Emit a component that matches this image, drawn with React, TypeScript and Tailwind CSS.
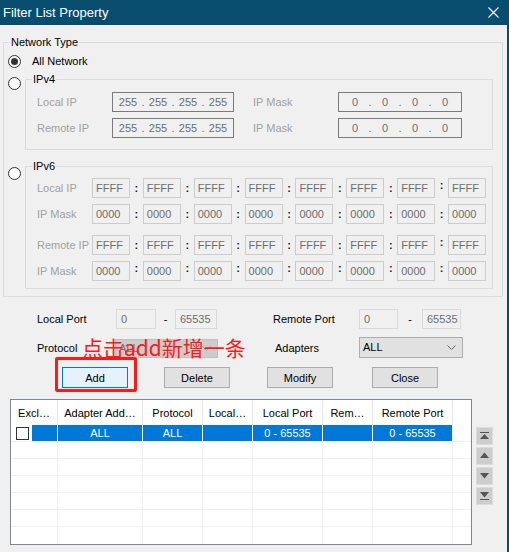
import React from 'react';

// ==================== SMALL PARTS ====================
function Radio({ checked }: { checked?: boolean }) {
  return (
    <span className="flex h-[13px] w-[13px] shrink-0 items-center justify-center rounded-full border border-[#333333] bg-white">
      {checked && <span className="h-[7px] w-[7px] rounded-full bg-[#333333]" />}
    </span>
  );
}

function IpBox({ parts, width }: { parts: string[]; width: string }) {
  return (
    <div className={`flex h-[20px] items-center justify-center border border-[#7a7a7a] text-[#6d6d6d] ${width}`}>
      {parts.map((p, i) => (
        <React.Fragment key={i}>
          {i > 0 && <span className="w-[8px] text-center">.</span>}
          <span className="w-[22px] text-center">{p}</span>
        </React.Fragment>
      ))}
    </div>
  );
}

function V4Row({ label, value, mask }: { label: string; value: string; mask: string }) {
  return (
    <div className="flex h-[20px] items-center">
      <span className="w-[75px] text-[#a0a0a0]">{label}</span>
      <IpBox parts={value.split('.')} width="w-[122px]" />
      <span className="ml-[19px] w-[85px] text-[#a0a0a0]">IP Mask</span>
      <IpBox parts={mask.split('.')} width="w-[124px]" />
    </div>
  );
}

function V6Row({ label, value, raised }: { label: string; value: string; raised: boolean[] }) {
  return (
    <div className="flex h-[20px] items-center">
      <span className="w-[55px] text-[#a0a0a0]">{label}</span>
      <div className="flex w-[394px]">
        {raised.concat([false]).map((up, i) => (
          <React.Fragment key={i}>
            {i > 0 && (
              <span
                className={`flex h-[20px] flex-1 justify-center font-bold text-[#1a1a2e] ${
                  raised[i - 1] ? 'items-start leading-[14px]' : 'items-center'
                }`}
              >
                :
              </span>
            )}
            <span className="flex h-[20px] w-[38px] items-center border border-[#cccccc] pl-[3px] text-[#6d6d6d]">
              {value}
            </span>
          </React.Fragment>
        ))}
      </div>
    </div>
  );
}

function PortBox({ value, width }: { value: string; width: string }) {
  return (
    <span className={`flex h-[20px] items-center border border-[#dadada] pl-[4px] text-[#6d6d6d] ${width}`}>{value}</span>
  );
}

function Button({ label, active }: { label: string; active?: boolean }) {
  return (
    <button
      className={`flex h-[21px] w-[66px] items-center justify-center border text-[11px] text-black ${
        active ? 'border-[#0078d7] bg-[#e5f1fb]' : 'border-[#adadad] bg-[#e1e1e1]'
      }`}
    >
      {label}
    </button>
  );
}

function Chevron({ color }: { color: string }) {
  return (
    <svg width="9" height="5" viewBox="0 0 9 5">
      <path d="M0.5 0.5 L4.5 4.5 L8.5 0.5" fill="none" stroke={color} strokeWidth="1" />
    </svg>
  );
}

function ArrowButton({ kind }: { kind: 'top' | 'up' | 'down' | 'bottom' }) {
  return (
    <div className="flex h-[18px] w-[17px] items-center justify-center border border-[#dcdcdc] bg-[#cdcdcd]">
      <svg width="15" height="16" viewBox="0 0 15 16">
        {kind === 'top' && (
          <>
            <rect x="3" y="4" width="9" height="1" fill="#555555" />
            <path d="M7.5 6 L12 11 L3 11 Z" fill="#555555" />
          </>
        )}
        {kind === 'up' && <path d="M7.5 4.5 L12 10 L3 10 Z" fill="#555555" />}
        {kind === 'down' && <path d="M3 5 L12 5 L7.5 10.5 Z" fill="#555555" />}
        {kind === 'bottom' && (
          <>
            <path d="M3 4 L12 4 L7.5 9.5 Z" fill="#555555" />
            <rect x="3" y="11" width="9" height="1" fill="#555555" />
          </>
        )}
      </svg>
    </div>
  );
}

// ==================== LIST ====================
const COLUMNS = [
  { w: 'w-[47px]', title: 'Excl…', cell: '' },
  { w: 'w-[85px]', title: 'Adapter Add…', cell: 'ALL' },
  { w: 'w-[60px]', title: 'Protocol', cell: 'ALL' },
  { w: 'w-[50px]', title: 'Local…', cell: '' },
  { w: 'w-[70px]', title: 'Local Port', cell: '0 - 65535' },
  { w: 'w-[50px]', title: 'Rem…', cell: '' },
  { w: 'w-[80px]', title: 'Remote Port', cell: '0 - 65535' },
];

function FilterList() {
  return (
    <div className="flex h-[146px] w-[462px] flex-col border border-[#828790] bg-white text-[11px]">
      {/* header */}
      <div className="flex h-[25px] shrink-0">
        {COLUMNS.map((c) => (
          <div key={c.title} className={`flex items-center justify-center border-r border-[#e5e5e5] text-black ${c.w}`}>
            {c.title}
          </div>
        ))}
        <div className="flex-1" />
      </div>

      {/* selected row */}
      <div className="flex h-[17px] shrink-0 border-b border-[#f0f0f0]">
        <div className="flex w-[47px] items-center border-r border-[#f0f0f0]">
          <span className="ml-[5px] h-[13px] w-[13px] border border-[#333333] bg-white" />
          <span className="ml-[3px] h-full flex-1 bg-[#0078d7]" />
        </div>
        {COLUMNS.slice(1).map((c) => (
          <div key={c.title} className={`flex items-center justify-center border-r border-[#f0f0f0] bg-[#0078d7] text-white ${c.w}`}>
            {c.cell}
          </div>
        ))}
        <div className="flex-1" />
      </div>

      {/* empty rows */}
      {[0, 1, 2, 3, 4, 5].map((r) => (
        <div key={r} className="flex h-[17px] shrink-0 border-b border-[#f0f0f0] last:border-b-0">
          {COLUMNS.map((c) => (
            <div key={c.title} className={`border-r border-[#f0f0f0] ${c.w}`} />
          ))}
          <div className="flex-1" />
        </div>
      ))}
    </div>
  );
}

// ==================== DIALOG ====================
export default function App() {
  return (
    <div className="flex h-[552px] w-[509px] flex-col overflow-hidden border-r-2 border-[#0b4c6d] bg-[#f0f0f0] font-['Liberation_Sans',Arial,sans-serif] text-[11px] leading-[14px] text-black">
      {/* Title bar */}
      <div className="flex h-[25px] shrink-0 items-center justify-between bg-[#084c6e] pl-[3px] pr-[8px]">
        <span className="text-[13px] text-white">Filter List Property</span>
        <svg width="11" height="11" viewBox="0 0 11 11">
          <path d="M0.5 0.5 L10.5 10.5 M10.5 0.5 L0.5 10.5" stroke="white" strokeWidth="1.1" />
        </svg>
      </div>

      {/* Network Type group */}
      <fieldset className="ml-[3px] mt-[10px] w-[500px] border border-[#dcdcdc] pb-[7px]">
        <legend className="ml-[6px] px-[1px] leading-[14px]">Network Type</legend>

        <div className="ml-[4px] mt-[5px] flex h-[14px] items-center">
          <Radio checked />
          <span className="ml-[11px]">All Network</span>
        </div>

        {/* IPv4 */}
        <div className="ml-[4px] mt-[4px] flex items-start">
          <div className="mt-[5px]">
            <Radio />
          </div>
          <fieldset className="ml-[4px] w-[468px] border border-[#dcdcdc] pb-[11px] pl-[11px]">
            <legend className="ml-[-5px] px-[1px] leading-[14px]">IPv4</legend>
            <div className="mt-[6px] flex flex-col gap-[6px]">
              <V4Row label="Local IP" value="255.255.255.255" mask="0.0.0.0" />
              <V4Row label="Remote IP" value="255.255.255.255" mask="0.0.0.0" />
            </div>
          </fieldset>
        </div>

        {/* IPv6 */}
        <div className="ml-[4px] mt-[9px] flex items-start">
          <div className="mt-[8px]">
            <Radio />
          </div>
          <fieldset className="ml-[4px] w-[468px] border border-[#dcdcdc] pb-[7px] pl-[11px]">
            <legend className="ml-[-5px] px-[1px] leading-[14px]">IPv6</legend>
            <div className="mt-[5px] flex flex-col">
              <V6Row label="Local IP" value="FFFF" raised={[false, false, false, false, false, false, true]} />
              <div className="mt-[6px]">
                <V6Row label="IP Mask" value="0000" raised={[false, false, false, false, false, false, false]} />
              </div>
              <div className="mt-[11px]">
                <V6Row label="Remote IP" value="FFFF" raised={[false, false, false, false, false, false, true]} />
              </div>
              <div className="mt-[6px]">
                <V6Row label="IP Mask" value="0000" raised={[true, true, true, true, true, true, true]} />
              </div>
            </div>
          </fieldset>
        </div>
      </fieldset>

      {/* Ports */}
      <div className="mt-[12px] flex h-[20px] items-center pl-[37px]">
        <div className="flex w-[236px] items-center">
          <span className="w-[79px]">Local Port</span>
          <PortBox value="0" width="w-[40px]" />
          <span className="w-[19px] text-center">-</span>
          <PortBox value="65535" width="w-[42px]" />
        </div>
        <span className="w-[86px]">Remote Port</span>
        <PortBox value="0" width="w-[39px]" />
        <span className="w-[24px] text-center">-</span>
        <PortBox value="65535" width="w-[39px]" />
      </div>

      {/* Protocol / Adapters */}
      <div className="relative mt-[9px] flex h-[20px] items-center pl-[37px]">
        <div className="flex w-[236px] items-center">
          <span className="w-[78px]">Protocol</span>
          <div className="flex h-[19px] w-[103px] items-center justify-between border border-[#bfbfbf] bg-[#cccccc] pl-[3px] pr-[6px] text-[#6d6d6d]">
            <span>ALL</span>
            <Chevron color="#9a9a9a" />
          </div>
        </div>
        <span className="w-[86px] pl-[2px]">Adapters</span>
        <div className="-mt-[2px] flex h-[21px] w-[104px] items-center justify-between border border-[#adadad] bg-[#e1e1e1] pl-[3px] pr-[6px]">
          <span>ALL</span>
          <Chevron color="#606060" />
        </div>

        {/* annotation */}
        <span className="absolute left-[82px] top-[-1px] font-['Noto_Sans_CJK_SC',sans-serif] text-[21px] leading-[21px] text-[#ff1a1a]">
          点击add新增一条
        </span>
      </div>

      {/* Buttons */}
      <div className="mt-[9px] flex h-[21px] items-center">
        <div className="relative ml-[62px]">
          <Button label="Add" active />
          <span className="absolute -bottom-[4px] -left-[7px] -right-[9px] -top-[10px] rounded-[2px] border-[3px] border-[#ff1a1a]" />
        </div>
        <div className="ml-[36px]">
          <Button label="Delete" />
        </div>
        <div className="ml-[37px]">
          <Button label="Modify" />
        </div>
        <div className="ml-[39px]">
          <Button label="Close" />
        </div>
      </div>

      {/* List + move buttons */}
      <div className="ml-[10px] mt-[11px] flex items-start">
        <FilterList />
        <div className="ml-[4px] mt-[28px] flex flex-col gap-[2px]">
          <ArrowButton kind="top" />
          <ArrowButton kind="up" />
          <ArrowButton kind="down" />
          <ArrowButton kind="bottom" />
        </div>
      </div>
    </div>
  );
}
